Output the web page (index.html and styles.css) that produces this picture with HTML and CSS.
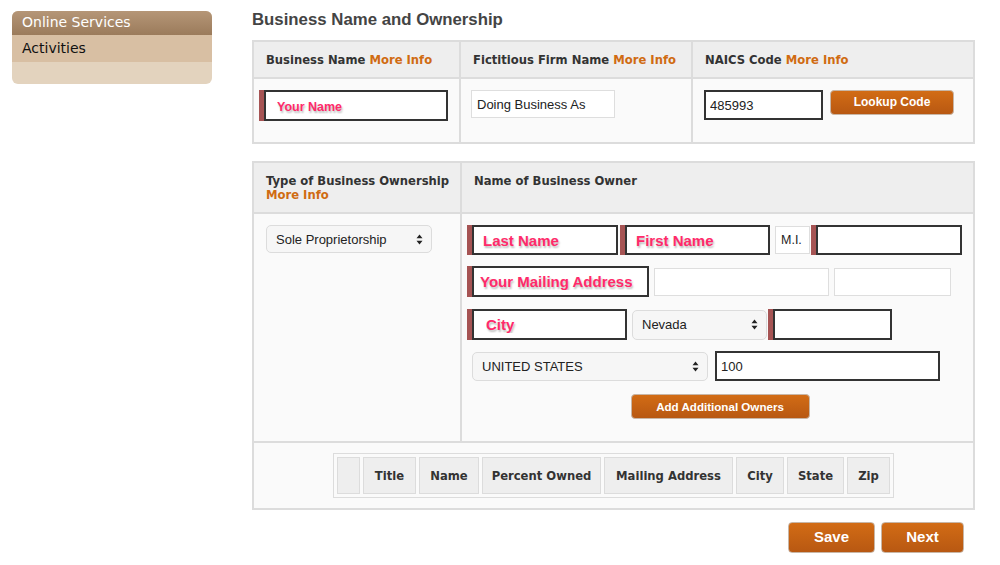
FILE: index.html
```html
<!DOCTYPE html>
<html>
<head>
<meta charset="utf-8">
<title>Business Name and Ownership</title>
<link rel="stylesheet" href="styles.css">
</head>
<body>
<div class="page">
  <aside class="side">
    <div class="side-head">Online Services</div>
    <div class="side-item">Activities</div>
    <div class="side-foot"></div>
  </aside>
  <main class="main">
    <h1 class="title">Business Name and Ownership</h1>

    <table class="grid t1">
      <colgroup><col class="w207"><col class="w232"><col></colgroup>
      <tr class="head h38">
        <th>Business Name <span class="more">More Info</span></th>
        <th>Fictitious Firm Name <span class="more">More Info</span></th>
        <th>NAICS Code <span class="more">More Info</span></th>
      </tr>
      <tr class="body h66">
        <td class="p6"><div class="req"><input class="box dark w184 h31 pink pn1" value="Your Name"></div></td>
        <td class="p11"><input class="box light w144 h28" value="Doing Business As"></td>
        <td class="p12"><div class="inline"><input class="box dark w119 h30 plain" value="485993"><button class="btn lookup">Lookup Code</button></div></td>
      </tr>
    </table>

    <table class="grid t2">
      <colgroup><col class="w208"><col></colgroup>
      <tr class="head h51">
        <th class="top">Type of Business Ownership<br><span class="more">More Info</span></th>
        <th class="top">Name of Business Owner</th>
      </tr>
      <tr class="body h229">
        <td class="p13">
          <div class="select w166 h28"><span>Sole Proprietorship</span><svg class="arrows" width="7" height="11" viewBox="0 0 7 11"><path d="M3.5 0.5L6.5 4.3H0.5Z M3.5 10.5L6.5 6.7H0.5Z" fill="#222"/></svg></div>
        </td>
        <td class="p6 owner">
          <div class="frow">
            <div class="req"><input class="box dark w146 h30 pink big pn-last" value="Last Name"></div>
            <div class="req"><input class="box dark w145 h30 pink big pn-first" value="First Name"></div>
            <input class="box light w35 h28 mi" value="M.I.">
            <div class="req flush"><input class="box dark w146 h30" value=""></div>
          </div>
          <div class="frow gap12">
            <div class="req"><input class="box dark w177 h31 pink big pn-mail" value="Your Mailing Address"></div>
            <input class="box light w175 h28 g5" value="">
            <input class="box light w117 h28 g5" value="">
          </div>
          <div class="frow">
            <div class="req"><input class="box dark w155 h31 pink big pn-city" value="City"></div>
            <div class="select w135 h30 g5"><span>Nevada</span><svg class="arrows" width="7" height="11" viewBox="0 0 7 11"><path d="M3.5 0.5L6.5 4.3H0.5Z M3.5 10.5L6.5 6.7H0.5Z" fill="#222"/></svg></div>
            <div class="req flush"><input class="box dark w119 h31" value=""></div>
          </div>
          <div class="frow indent">
            <div class="select w236 h29"><span>UNITED STATES</span><svg class="arrows" width="7" height="11" viewBox="0 0 7 11"><path d="M3.5 0.5L6.5 4.3H0.5Z M3.5 10.5L6.5 6.7H0.5Z" fill="#222"/></svg></div>
            <input class="box dark w225 h30 plain g7" value="100">
          </div>
          <div class="btnrow"><button class="btn add">Add Additional Owners</button></div>
        </td>
      </tr>
      <tr class="body h67">
        <td colspan="2" class="summary">
          <table class="owners">
            <tr>
              <th class="blank"></th>
              <th class="c53">Title</th>
              <th class="c60">Name</th>
              <th class="c119">Percent Owned</th>
              <th class="c129">Mailing Address</th>
              <th class="c48">City</th>
              <th class="c57">State</th>
              <th class="c43">Zip</th>
            </tr>
          </table>
        </td>
      </tr>
    </table>

    <div class="actions">
      <button class="btn big-btn save">Save</button>
      <button class="btn big-btn next">Next</button>
    </div>
  </main>
</div>
</body>
</html>
```
FILE: styles.css
```css
* { box-sizing: border-box; }
html, body { margin: 0; padding: 0; background: #fff; }
body { font-family: "DejaVu Sans", Verdana, sans-serif; color: #333; }

.page { display: flex; align-items: flex-start; }

/* Sidebar */
.side {
  margin: 11px 0 0 12px;
  width: 200px;
  border-radius: 6px;
  overflow: hidden;
  background: #e3d3be;
}
.side-head {
  height: 24px;
  padding-left: 10px;
  line-height: 23px;
  font-size: 14px;
  color: #fff;
  background: linear-gradient(#b59677, #9b7b5b);
}
.side-item {
  height: 27px;
  padding-left: 10px;
  line-height: 27px;
  font-size: 14px;
  color: #111;
  background: #d8bfa3;
}
.side-foot { height: 22px; }

/* Main */
.main { margin-left: 40px; width: 723px; }
.title {
  margin: 10px 0 10px 0;
  font-family: "Liberation Sans", Arial, sans-serif;
  font-size: 16.8px;
  font-weight: bold;
  color: #444;
  line-height: 20px;
}

.grid {
  width: 723px;
  border-collapse: collapse;
  table-layout: fixed;
}
.grid > tbody > tr > th,
.grid > tbody > tr > td {
  border: 2px solid #dcdcdc;
  padding: 0;
}
.grid .head th {
  background: #eeeeee;
  text-align: left;
  font-size: 11.6px;
  font-weight: bold;
  color: #333;
  padding: 0 2px 0 12px;
  line-height: 14px;
  white-space: nowrap;
  vertical-align: middle;
}
.grid .head th.top { vertical-align: top; padding-top: 11px; }
.grid .body td { background: #fafafa; vertical-align: top; padding-top: 11px; }
.more { color: #d06b12; }

.w207 { width: 207px; }
.w232 { width: 232px; }
.w208 { width: 208px; }
.h38 { height: 37px; }
.h66 { height: 65px; }
.h51 { height: 51px; }
.h229 { height: 229px; }
.h67 { height: 67px; }

.t1 { margin-bottom: 17px; }

.grid .body td.p6 { padding-left: 5px; }
.grid .body td.p11 { padding-left: 10px; }
.grid .body td.p12 { padding-left: 11px; }
.grid .body td.p13 { padding-left: 12px; padding-top: 11px; }

/* Inputs */
.box {
  display: block;
  margin: 0;
  padding: 0 0 0 5px;
  font-family: "Liberation Sans", Arial, sans-serif;
  font-size: 13px;
  color: #222;
  background: #fff;
  outline: none;
}
.dark { border: 2px solid #333; }
.light { border: 1px solid #dedede; }
.req {
  display: flex;
  border-left: 5px solid #a65454;
}
.pink {
  color: #ff2a6a;
  font-weight: bold;
  font-size: 12.5px;
  text-shadow: 1px 2px 2px #bdbdbd;
}
.pink.big { font-size: 15px; }
.pn1 { padding-left: 11px; padding-top: 2px; }
.pn-last { padding-left: 9px; }
.pn-first { padding-left: 9px; }
.pn-mail { padding-left: 6px; }
.pn-city { padding-left: 12px; }
.plain { padding-left: 4px; padding-top: 1px; }
.mi { padding-left: 5px; font-size: 12.5px; }

.w35 { width: 35px; }
.w117 { width: 117px; }
.w119 { width: 119px; }
.w135 { width: 135px; }
.w144 { width: 144px; }
.w145 { width: 145px; }
.w146 { width: 146px; }
.w155 { width: 155px; }
.w166 { width: 166px; }
.w175 { width: 175px; }
.w177 { width: 177px; }
.w184 { width: 184px; }
.w225 { width: 225px; }
.w236 { width: 236px; }
.h28 { height: 28px; }
.h29 { height: 29px; }
.h30 { height: 30px; }
.h31 { height: 31px; }

.inline { display: flex; align-items: flex-start; gap: 7px; }

/* Select */
.select {
  display: flex;
  align-items: center;
  justify-content: space-between;
  padding: 0 8px 0 9px;
  border: 1px solid #dcdcdc;
  border-radius: 5px;
  background: #f6f6f6;
  font-family: "Liberation Sans", Arial, sans-serif;
  font-size: 13px;
  color: #222;
}
.arrows { display: block; }

/* Owner block */
.grid .body td.owner { padding-top: 11px; }
.frow { display: flex; align-items: center; gap: 2px; margin-bottom: 11px; }
.frow.gap12 { margin-bottom: 12px; }
.frow .mi { margin-left: 3px; }
.frow .req.flush { margin-left: -1px; }
.frow .g5 { margin-left: 3px; }
.frow .g7 { margin-left: 5px; }
.frow.indent { padding-left: 5px; margin-bottom: 13px; }
.frow .select.g5 { margin-left: 3px; }

/* Buttons */
.btn {
  margin: 0;
  font-family: "Liberation Sans", Arial, sans-serif;
  font-weight: bold;
  color: #fff;
  border: 1px solid #c8b6a6;
  border-radius: 4px;
  background: linear-gradient(#d26c15, #b85812);
  cursor: pointer;
}
.lookup { width: 124px; height: 25px; font-size: 12px; padding: 0 0 2px 0; }
.btnrow { display: flex; justify-content: center; }
.add { width: 179px; height: 25px; font-size: 11.6px; padding: 0 0 1px 0; }

/* Summary table */
.grid .body td.summary { vertical-align: middle; padding: 0; }
.owners {
  margin: 0 auto;
  border: 1px solid #dcdcdc;
  border-spacing: 3px;
  background: #fafafa;
  table-layout: fixed;
}
.owners th {
  height: 37px;
  padding: 0;
  border: 1px solid #dcdcdc;
  background: #eeeeee;
  font-size: 11.6px;
  font-weight: bold;
  color: #333;
  text-align: center;
  white-space: nowrap;
}
.owners th.blank { width: 23px; }
.c53 { width: 53px; }
.c60 { width: 60px; }
.c119 { width: 119px; }
.c129 { width: 129px; }
.c48 { width: 48px; }
.c57 { width: 57px; }
.c43 { width: 43px; }

/* Actions */
.actions {
  display: flex;
  justify-content: flex-end;
  gap: 6px;
  margin-top: 12px;
  padding-right: 11px;
}
.big-btn { height: 31px; font-size: 15px; padding: 0 0 2px 0; }
.save { width: 87px; }
.next { width: 83px; }
```
